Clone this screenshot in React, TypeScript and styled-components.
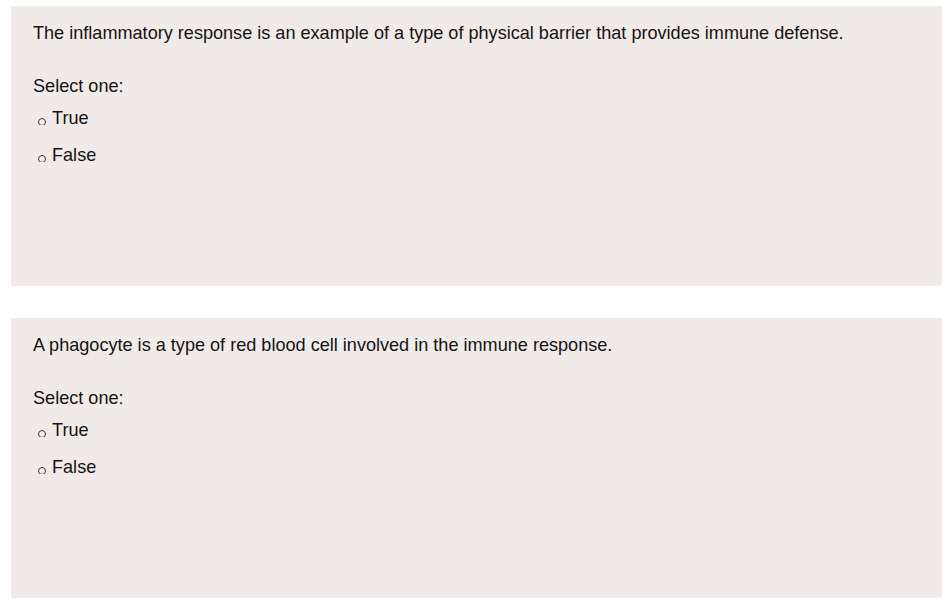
import React from "react";
import styled, { createGlobalStyle } from "styled-components";

const Global = createGlobalStyle`
  html, body { margin: 0; padding: 0; background: #ffffff; }
  body { font-family: "Liberation Sans", Arial, Helvetica, sans-serif; color: #141414; }
`;

const Page = styled.div`
  display: flex;
  flex-direction: column;
  gap: 32px;
  padding: 6px 10px 0 11px;
  width: 931px;
`;

const Card = styled.section`
  background: #f0ebe9;
  height: 280px;
  box-sizing: border-box;
  padding: 16px 22px 0 22px;
`;

const Question = styled.p`
  margin: 0;
  font-size: 18.1px;
  line-height: 22px;
`;

const Prompt = styled.p`
  margin: 31px 0 0 0;
  font-size: 18.1px;
  line-height: 22px;
`;

const Options = styled.div`
  display: flex;
  flex-direction: column;
  gap: 15px;
  margin-top: 10px;
`;

const Option = styled.label`
  display: flex;
  align-items: flex-start;
  font-size: 18.1px;
  line-height: 22px;
  padding-left: 5px;
`;

const RadioClip = styled.span`
  display: block;
  width: 8px;
  height: 7px;
  overflow: hidden;
  margin: 11px 6px 0 0;
  flex: none;
`;

const Radio = styled.span`
  display: block;
  width: 6px;
  height: 6px;
  border: 1px solid #3a3a3a;
  border-radius: 50%;
  box-sizing: content-box;
`;

const questions = [
  "The inflammatory response is an example of a type of physical barrier that provides immune defense.",
  "A phagocyte is a type of red blood cell involved in the immune response.",
];

export default function App() {
  return (
    <>
      <Global />
      <Page>
        {questions.map((q) => (
          <Card key={q}>
            <Question>{q}</Question>
            <Prompt>Select one:</Prompt>
            <Options>
              <Option>
                <RadioClip>
                  <Radio />
                </RadioClip>
                True
              </Option>
              <Option>
                <RadioClip>
                  <Radio />
                </RadioClip>
                False
              </Option>
            </Options>
          </Card>
        ))}
      </Page>
    </>
  );
}
